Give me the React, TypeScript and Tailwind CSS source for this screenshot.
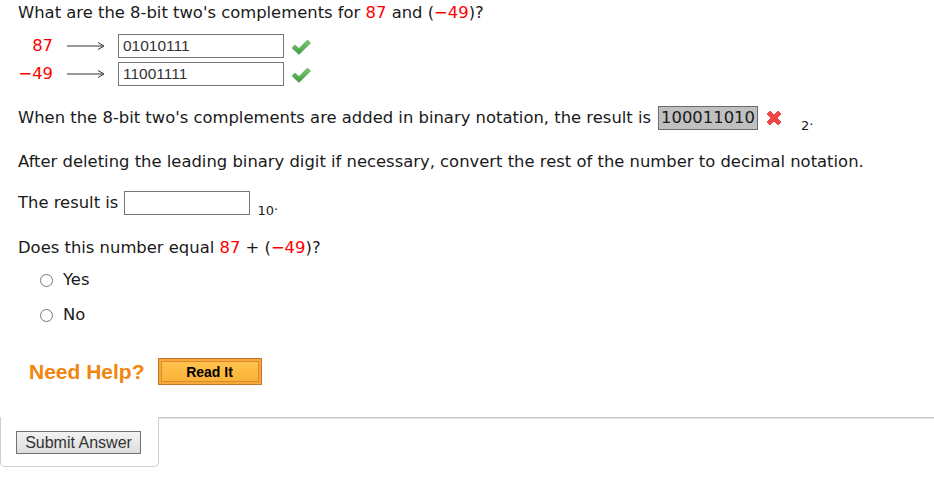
import type { ReactNode } from "react";

const verdana = { fontFamily: '"DejaVu Sans", Verdana, sans-serif' };
const arial = { fontFamily: '"Liberation Sans", Arial, sans-serif' };

function Red({ children }: { children: ReactNode }) {
  return <span className="text-[#ff0000]">{children}</span>;
}

function Check() {
  return (
    <svg width="20" height="18" viewBox="0 0 20 18" className="shrink-0">
      <defs>
        <linearGradient id="ck" x1="0" y1="0" x2="0" y2="1">
          <stop offset="0" stopColor="#7ccc74" />
          <stop offset="1" stopColor="#3f9a3f" />
        </linearGradient>
      </defs>
      <path d="M1 10 L4 7 L8 10.5 L16.5 2 L19.5 5 L8 16.5 Z" fill="url(#ck)" stroke="#4a9d48" strokeWidth="0.6" strokeLinejoin="round" />
    </svg>
  );
}

function Cross() {
  return (
    <svg width="18" height="18" viewBox="0 0 18 18" className="shrink-0">
      <path d="M2 5 L5 2 L9 6 L13 2 L16 5 L12 9 L16 13 L13 16 L9 12 L5 16 L2 13 L6 9 Z" fill="#f04545" stroke="#e03a3a" strokeWidth="0.8" strokeLinejoin="round" />
    </svg>
  );
}

function Arrow() {
  return (
    <svg width="38" height="10" viewBox="0 0 38 10" className="shrink-0">
      <path d="M0 5 H36" stroke="#333" strokeWidth="1" />
      <path d="M31 1.5 L37 5 L31 8.5" stroke="#333" strokeWidth="1" fill="none" />
    </svg>
  );
}

function Base({ n }: { n: string }) {
  return (
    <span className="text-[13px] leading-none">
      <span className="relative top-[5px]">{n}</span>.
    </span>
  );
}

function Radio({ label }: { label: string }) {
  return (
    <div className="flex h-[20px] items-center gap-[10px] pl-[40px]">
      <span className="h-[13px] w-[13px] rounded-full border border-[#767676] bg-white" />
      <span className="leading-[20px]">{label}</span>
    </div>
  );
}

function BinaryRow({ num, value }: { num: string; value: string }) {
  return (
    <div className="flex h-[24px] items-center">
      <span className="w-[35px] text-right leading-[20px] text-[#ff0000]">{num}</span>
      <span className="ml-[14px]"><Arrow /></span>
      <div className="ml-[13px] flex h-[24px] w-[166px] items-center border border-[#767676] px-[4px] text-[15.5px] text-[#333]" style={arial}>
        {value}
      </div>
      <span className="ml-[7px] mt-[2px]"><Check /></span>
    </div>
  );
}

export default function App() {
  return (
    <div className="h-[484px] w-[934px] overflow-hidden bg-white text-[16.4px] leading-[20px] text-[#1a1a1a]" style={verdana}>
      <div className="pl-[18px] pt-[3px]">
        <p className="h-[20px]">
          What are the 8-bit two's complements for <Red>87</Red> and (<Red>−49</Red>)?
        </p>
        <div className="mt-[11px] flex flex-col gap-[4px]">
          <BinaryRow num="87" value="01010111" />
          <BinaryRow num="−49" value="11001111" />
        </div>
        <div className="mt-[20px] flex h-[24px] items-center">
          <span>When the 8-bit two's complements are added in binary notation, the result is</span>
          <span className="ml-[7px] flex h-[24px] items-center border border-[#6b6b6b] bg-[#c0c0c0] px-[2px]">100011010</span>
          <span className="ml-[7px]"><Cross /></span>
          <span className="ml-[18px] mt-[4px]"><Base n="2" /></span>
        </div>
        <p className="mt-[22px] h-[20px]">
          After deleting the leading binary digit if necessary, convert the rest of the number to decimal notation.
        </p>
        <div className="mt-[19px] flex h-[24px] items-center">
          <span>The result is</span>
          <span className="ml-[6px] h-[24px] w-[126px] border border-[#767676]" />
          <span className="ml-[7px] mt-[4px]"><Base n="10" /></span>
        </div>
        <p className="mt-[23px] h-[20px]">
          Does this number equal <Red>87</Red> + (<Red>−49</Red>)?
        </p>
      </div>
      <div className="mt-[12px] flex flex-col gap-[15px]">
        <Radio label="Yes" />
        <Radio label="No" />
      </div>
      <div className="mt-[33px] flex h-[27px] items-center pl-[29px]" style={arial}>
        <span className="text-[21px] font-bold leading-none text-[#f0850f]">Need Help?</span>
        <button className="ml-[13px] flex h-[27px] w-[104px] items-center justify-center border border-[#c0762a] bg-[#f8a93a] p-[2px]">
          <span className="flex h-full w-full items-center justify-center border border-[#d98a2e] bg-[linear-gradient(#ffc24e,#fbb238)] text-[14px] font-bold text-black">Read It</span>
        </button>
      </div>
      <div className="mt-[32px] flex">
        <div className="h-[50px] w-[159px] rounded-b-[5px] border-r border-b border-l border-[#cfcfcf] pl-[15px] pt-[14px]">
          <button className="h-[23px] w-[125px] border border-[#707070] bg-[linear-gradient(#f2f2f2,#dddddd)] text-[16px] leading-none text-[#333]" style={arial}>
            Submit Answer
          </button>
        </div>
        <div className="h-[2px] flex-1 border-t border-[#c8c8c8] bg-[#e6e6e6]" />
      </div>
    </div>
  );
}
